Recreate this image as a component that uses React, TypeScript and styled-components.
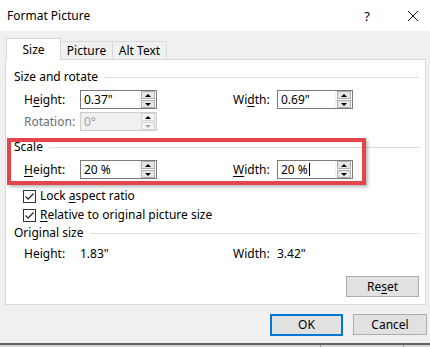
import React from "react";
import styled, { createGlobalStyle } from "styled-components";

const Global = createGlobalStyle`
  html, body { margin: 0; padding: 0; background: #f0f0f0; }
  body { font-family: "Segoe UI", "Noto Sans", "Open Sans", sans-serif; font-size: 12px; color: #000; }
  * { box-sizing: border-box; }
`;

const Dialog = styled.div`
  width: 430px;
  height: 347px;
  display: flex;
  flex-direction: column;
  background: #f0f0f0;
  overflow: hidden;
`;

const TitleBar = styled.div`
  height: 31px;
  flex: none;
  background: #fff;
  display: flex;
  align-items: center;
  padding-left: 7px;
`;

const Title = styled.div`
  flex: 1;
  font-size: 12px;
  line-height: 16px;
`;

const Help = styled.div`
  width: 20px;
  text-align: center;
  margin-right: 29px;
  font-size: 13px;
`;

const Close = styled.div`
  width: 14px;
  height: 14px;
  margin-right: 10px;
  display: flex;
  align-items: center;
  justify-content: center;
`;

const Body = styled.div`
  flex: 1;
  display: flex;
  flex-direction: column;
  padding: 7px 4px 0 5px;
`;

const TabRow = styled.div`
  display: flex;
  align-items: flex-end;
  height: 21px;
  padding-left: 1px;
  position: relative;
  z-index: 1;
`;

const Tab = styled.div<{ $active?: boolean; $w: number }>`
  width: ${(p) => p.$w}px;
  height: ${(p) => (p.$active ? 22 : 18)}px;
  margin-bottom: ${(p) => (p.$active ? -1 : 0)}px;
  background: ${(p) => (p.$active ? "#fff" : "#f0f0f0")};
  border: 1px solid #d9d9d9;
  border-bottom: none;
  border-left: ${(p) => (p.$active ? "1px solid #d9d9d9" : "none")};
  display: flex;
  align-items: center;
  justify-content: center;
  line-height: 16px;
  padding-top: ${(p) => (p.$active ? 0 : 1)}px;
`;

const Panel = styled.div`
  height: 246px;
  flex: none;
  background: #fff;
  border: 1px solid #d9d9d9;
  position: relative;
  display: flex;
  flex-direction: column;
  padding-top: 9px;
`;

const GroupHead = styled.div<{ $mt?: number }>`
  display: flex;
  align-items: center;
  height: 16px;
  padding-left: 8px;
  padding-right: 6px;
  margin-top: ${(p) => p.$mt ?? 0}px;
  line-height: 16px;
`;

const GroupLine = styled.div`
  flex: 1;
  height: 1px;
  background: #dcdcdc;
  margin-left: 6px;
  margin-top: 1px;
`;

const FieldRow = styled.div<{ $mt: number }>`
  display: grid;
  grid-template-columns: 56px 77px 76px 44px 76px;
  align-items: center;
  height: 19px;
  padding-left: 18px;
  margin-top: ${(p) => p.$mt}px;
`;

const Label = styled.div<{ $disabled?: boolean; $col?: number }>`
  grid-column: ${(p) => p.$col ?? 1};
  color: ${(p) => (p.$disabled ? "#6d6d6d" : "#000")};
  line-height: 16px;
  white-space: nowrap;
`;

const Value = styled.div<{ $col: number }>`
  grid-column: ${(p) => p.$col};
  line-height: 16px;
  white-space: nowrap;
`;

const Key = styled.span`
  text-decoration: underline;
  text-underline-offset: 2px;
`;

const Input = styled.div<{ $disabled?: boolean; $col: number }>`
  grid-column: ${(p) => p.$col};
  height: 19px;
  border: 1px solid ${(p) => (p.$disabled ? "#cccccc" : "#7a7a7a")};
  background: ${(p) => (p.$disabled ? "#f0f0f0" : "#fff")};
  color: ${(p) => (p.$disabled ? "#a0a0a0" : "#000")};
  display: flex;
  align-items: center;
  padding-left: 3px;
  line-height: 15px;
`;

const InputText = styled.div`
  flex: 1;
  display: flex;
  align-items: center;
  white-space: nowrap;
`;

const Caret = styled.span`
  display: inline-block;
  width: 1px;
  height: 13px;
  background: #000;
  margin-left: 1px;
`;

const Spin = styled.div`
  width: 17px;
  height: 17px;
  display: flex;
  flex-direction: column;
  gap: 1px;
  padding: 0 1px 0 1px;
  border-left: 1px solid #f0f0f0;
`;

const SpinBtn = styled.div<{ $dim?: boolean }>`
  flex: 1;
  background: ${(p) => (p.$dim ? "#f4f4f4" : "#e6e6e6")};
  border: 1px solid ${(p) => (p.$dim ? "#d4d4d4" : "#adadad")};
  display: flex;
  align-items: center;
  justify-content: center;
`;

const Arrow = styled.div<{ $down?: boolean; $dim?: boolean }>`
  width: 0;
  height: 0;
  border-left: 3px solid transparent;
  border-right: 3px solid transparent;
  ${(p) =>
    p.$down
      ? `border-top: 3px solid ${p.$dim ? "#a8a8a8" : "#000"};`
      : `border-bottom: 3px solid ${p.$dim ? "#a8a8a8" : "#000"};`}
`;

const CheckRow = styled.label<{ $mt: number }>`
  display: flex;
  align-items: center;
  gap: 4px;
  height: 16px;
  padding-left: 17px;
  margin-top: ${(p) => p.$mt}px;
  line-height: 16px;
`;

const CheckBox = styled.div`
  width: 13px;
  height: 13px;
  border: 1px solid #333;
  background: #fff;
  display: flex;
  align-items: center;
  justify-content: center;
`;

const ResetRow = styled.div`
  display: flex;
  justify-content: flex-end;
  padding-right: 6px;
  margin-top: 13px;
`;

const Button = styled.div<{ $default?: boolean; $w: number }>`
  width: ${(p) => p.$w}px;
  height: ${(p) => (p.$default ? 22 : 21)}px;
  background: #e1e1e1;
  border: ${(p) => (p.$default ? "2px solid #0078d7" : "1px solid #adadad")};
  display: flex;
  align-items: center;
  justify-content: center;
  line-height: 16px;
`;

const ButtonRow = styled.div`
  display: flex;
  justify-content: flex-end;
  gap: 10px;
  margin-top: 9px;
  margin-right: -1px;
`;

const Highlight = styled.div`
  position: absolute;
  left: 1px;
  top: 78px;
  width: 359px;
  height: 47px;
  border: 4px solid #e4444c;
  box-shadow: 2px 2px 3px rgba(0, 0, 0, 0.28), inset 0 1px 2px rgba(0, 0, 0, 0.08);
  pointer-events: none;
`;

const BelowWindow = styled.div`
  height: 4px;
  flex: none;
  border-top: 2px solid #646464;
  background: #d6d6d6;
  display: grid;
  grid-template-columns: 320px 83px 1fr;
`;

const BelowCell = styled.div`
  border-left: 1px solid #9a9a9a;
  &:first-child { border-left: none; }
`;

const Spinner: React.FC<{ disabled?: boolean }> = ({ disabled }) => (
  <Spin>
    <SpinBtn $dim={disabled}>
      <Arrow />
    </SpinBtn>
    <SpinBtn $dim={disabled}>
      <Arrow $down $dim={disabled} />
    </SpinBtn>
  </Spin>
);

const Check = () => (
  <CheckBox>
    <svg width="11" height="11" viewBox="0 0 11 11">
      <path d="M1.5 5.5 L4.2 8.2 L9.5 2.5" fill="none" stroke="#222" strokeWidth="1.2" />
    </svg>
  </CheckBox>
);

export default function App() {
  return (
    <>
      <Global />
      <Dialog>
        <TitleBar>
          <Title>Format Picture</Title>
          <Help>?</Help>
          <Close>
            <svg width="12" height="12" viewBox="0 0 12 12">
              <path d="M1 1 L11 11 M11 1 L1 11" stroke="#111" strokeWidth="1" />
            </svg>
          </Close>
        </TitleBar>
        <Body>
          <TabRow>
            <Tab $active $w={55}>Size</Tab>
            <Tab $w={52}>Picture</Tab>
            <Tab $w={54}>Alt Text</Tab>
          </TabRow>
          <Panel>
            <GroupHead>
              Size and rotate
              <GroupLine />
            </GroupHead>
            <FieldRow $mt={5}>
              <Label>
                H<Key>e</Key>ight:
              </Label>
              <Input $col={2}>
                <InputText>0.37"</InputText>
                <Spinner />
              </Input>
              <Label $col={4}>
                Wi<Key>d</Key>th:
              </Label>
              <Input $col={5}>
                <InputText>0.69"</InputText>
                <Spinner />
              </Input>
            </FieldRow>
            <FieldRow $mt={3}>
              <Label $disabled>Rotation:</Label>
              <Input $col={2} $disabled>
                <InputText>0°</InputText>
                <Spinner disabled />
              </Input>
            </FieldRow>
            <GroupHead $mt={8}>
              Scale
              <GroupLine />
            </GroupHead>
            <FieldRow $mt={5}>
              <Label>
                <Key>H</Key>eight:
              </Label>
              <Input $col={2}>
                <InputText>20 %</InputText>
                <Spinner />
              </Input>
              <Label $col={4}>
                <Key>W</Key>idth:
              </Label>
              <Input $col={5}>
                <InputText>
                  20 %<Caret />
                </InputText>
                <Spinner />
              </Input>
            </FieldRow>
            <CheckRow $mt={9}>
              <Check />
              <span>
                Lock <Key>a</Key>spect ratio
              </span>
            </CheckRow>
            <CheckRow $mt={3}>
              <Check />
              <span>
                <Key>R</Key>elative to original picture size
              </span>
            </CheckRow>
            <GroupHead $mt={2}>
              Original size
              <GroupLine />
            </GroupHead>
            <FieldRow $mt={3}>
              <Label>Height:</Label>
              <Value $col={2}>1.83"</Value>
              <Label $col={4}>Width:</Label>
              <Value $col={5}>3.42"</Value>
            </FieldRow>
            <ResetRow>
              <Button $w={73}>
                Re<Key>s</Key>et
              </Button>
            </ResetRow>
            <Highlight />
          </Panel>
          <ButtonRow>
            <Button $default $w={73}>OK</Button>
            <Button $w={74}>Cancel</Button>
          </ButtonRow>
        </Body>
        <BelowWindow>
          <BelowCell />
          <BelowCell />
          <BelowCell />
        </BelowWindow>
      </Dialog>
    </>
  );
}
